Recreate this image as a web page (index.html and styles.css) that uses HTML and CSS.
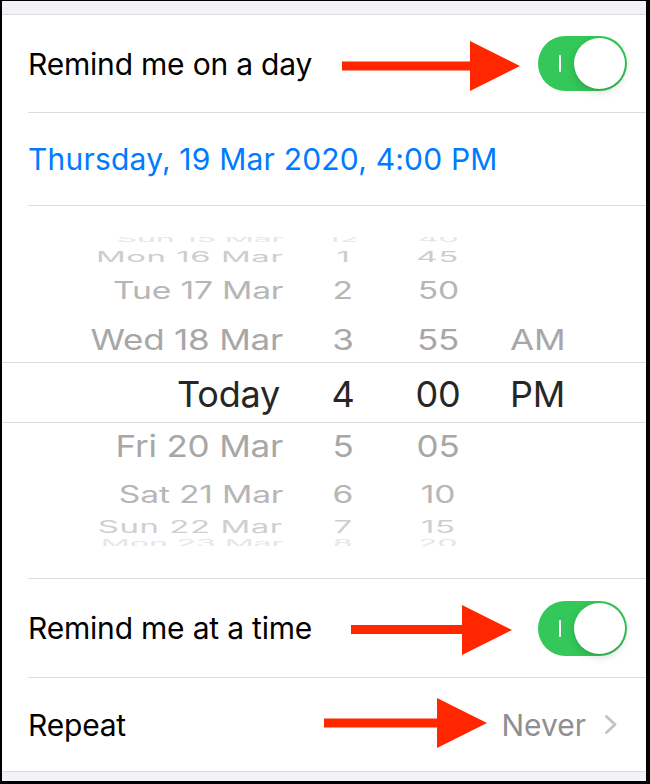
FILE: index.html
```html
<!DOCTYPE html>
<html lang="en">
<head>
<meta charset="utf-8">
<title>Reminder details</title>
<link rel="stylesheet" href="styles.css">
</head>
<body>
<div class="screen">
  <div class="top-gap"></div>

  <section class="group">
    <div class="cell">
      <div class="cell-body">
        <span class="label">Remind me on a day</span>
        <span class="switch"><span class="switch-mark"></span><span class="switch-knob"></span></span>
      </div>
    </div>

    <div class="cell">
      <div class="cell-body cell-date">
        <span class="label label-blue">Thursday, 19 Mar 2020, 4:00 PM</span>
      </div>
    </div>

    <div class="picker">
      <div class="wheel">
        <div class="wrow r-a"><span class="c-date"><i>Sun 15 Mar</i></span><span class="c-num"><i>12</i></span><span class="c-num"><i>40</i></span><span class="c-ampm"></span></div>
        <div class="wrow r-b"><span class="c-date"><i>Mon 16 Mar</i></span><span class="c-num"><i>1</i></span><span class="c-num"><i>45</i></span><span class="c-ampm"></span></div>
        <div class="wrow r-c"><span class="c-date"><i>Tue 17 Mar</i></span><span class="c-num"><i>2</i></span><span class="c-num"><i>50</i></span><span class="c-ampm"></span></div>
        <div class="wrow r-d"><span class="c-date"><i>Wed 18 Mar</i></span><span class="c-num"><i>3</i></span><span class="c-num"><i>55</i></span><span class="c-ampm"><i>AM</i></span></div>
        <div class="wrow r-sel"><span class="c-date"><i>Today</i></span><span class="c-num"><i>4</i></span><span class="c-num"><i>00</i></span><span class="c-ampm"><i>PM</i></span></div>
        <div class="wrow r-f"><span class="c-date"><i>Fri 20 Mar</i></span><span class="c-num"><i>5</i></span><span class="c-num"><i>05</i></span><span class="c-ampm"></span></div>
        <div class="wrow r-g"><span class="c-date"><i>Sat 21 Mar</i></span><span class="c-num"><i>6</i></span><span class="c-num"><i>10</i></span><span class="c-ampm"></span></div>
        <div class="wrow r-h"><span class="c-date"><i>Sun 22 Mar</i></span><span class="c-num"><i>7</i></span><span class="c-num"><i>15</i></span><span class="c-ampm"></span></div>
        <div class="wrow r-i"><span class="c-date"><i>Mon 23 Mar</i></span><span class="c-num"><i>8</i></span><span class="c-num"><i>20</i></span><span class="c-ampm"></span></div>
      </div>
    </div>
    <div class="sep"></div>

    <div class="cell">
      <div class="cell-body cell-time">
        <span class="label">Remind me at a time</span>
        <span class="switch"><span class="switch-mark"></span><span class="switch-knob"></span></span>
      </div>
    </div>

    <div class="cell">
      <div class="cell-body cell-last">
        <span class="label">Repeat</span>
        <span class="detail">
          <span class="detail-value">Never</span>
          <svg class="chevron" width="14" height="21" viewBox="0 0 14 21" aria-hidden="true">
            <polyline points="2.5,2.5 11,10.5 2.5,18.5" fill="none" stroke="#c4c4c8" stroke-width="3" stroke-linecap="round" stroke-linejoin="round"/>
          </svg>
        </span>
      </div>
    </div>
  </section>

  <!-- red callout arrows drawn over the list -->
  <svg class="callouts" width="650" height="784" viewBox="0 0 650 784" aria-hidden="true">
    <polygon points="342,61.5 470,61.5 470,41 520,66 470,91 470,70.5 342,70.5"/>
    <polygon points="351,625 462,625 462,605 512,630 462,655 462,634 351,634"/>
    <polygon points="324,718.5 437,718.5 437,698 487,723 437,748 437,727.5 324,727.5"/>
  </svg>
</div>
</body>
</html>
```

FILE: styles.css
```css
* {
  box-sizing: border-box;
}

html, body {
  margin: 0;
  padding: 0;
  background: #000;
}

.screen {
  position: relative;
  width: 650px;
  height: 784px;
  border-style: solid;
  border-color: #000;
  border-width: 1px 4px 3px 2px;
  background: #f2f2f7;
  font-family: "Inter", "Noto Sans", sans-serif;
  color: #000;
  overflow: hidden;
}

.top-gap {
  height: 13px;
}

.group {
  background: #fff;
  border-top: 1px solid #dcdce0;
  border-bottom: 1px solid #dcdce0;
}

.cell {
  padding-left: 26px;
}

.cell-body {
  display: flex;
  align-items: center;
  justify-content: space-between;
  height: 98px;
  padding-right: 19px;
  border-bottom: 1px solid #dcdce0;
}

.cell-date {
  height: 93px;
}

.cell-time {
  height: 99px;
}

.cell-last {
  height: 93px;
  padding-right: 28px;
  border-bottom: none;
}

.label {
  font-size: 30px;
  letter-spacing: -0.2px;
  line-height: 1;
}

.label-blue {
  color: #007aff;
  letter-spacing: 0.2px;
}

/* toggle switch */
.switch {
  display: flex;
  align-items: center;
  width: 89px;
  height: 55px;
  padding: 2px;
  border-radius: 28px;
  background: #34c759;
}

.switch-mark {
  width: 2px;
  height: 17px;
  margin-left: 19px;
  background: #fff;
  border-radius: 1px;
}

.switch-knob {
  width: 51px;
  height: 51px;
  margin-left: auto;
  border-radius: 50%;
  background: #fff;
  box-shadow: 0 3px 8px rgba(0, 0, 0, 0.15), 0 1px 1px rgba(0, 0, 0, 0.08);
}

/* date & time wheel */
.picker {
  height: 372px;
  padding-top: 31px;
}

.wheel {
  height: 309px;
  overflow: hidden;
}

.wrow {
  display: grid;
  grid-template-columns: 281px 120px 70px 1fr;
  grid-template-rows: 100%;
  font-size: 35px;
  letter-spacing: -0.2px;
  white-space: nowrap;
}

/* each wheel cell centres its label on the row, even when the row is shorter than the text */
.wrow > span {
  display: flex;
  align-items: center;
  height: 100%;
  min-height: 0;
}

.wrow i {
  display: block;
  font-style: normal;
  line-height: 1;
  flex: none;
}

.c-date {
  justify-content: flex-end;
}

.c-date i {
  transform-origin: right center;
}

.c-num {
  justify-content: center;
}

.c-ampm {
  padding-left: 37px;
}

.r-a { height: 24px; margin-top: -11px; color: #e6e6e6; }
.r-a i { transform: scale(0.92, 0.26); }
.r-b { height: 13px; color: #cdcdcd; }
.r-b i { transform: scale(0.94, 0.42); letter-spacing: 0.6px; }
.r-c { height: 54px; color: #b6b6b6; }
.r-c i { transform: scale(0.96, 0.68); }
.r-d { height: 45px; color: #a7a7a7; }
.r-d i { transform: scaleY(0.8); }

.r-sel {
  height: 61px;
  color: #262626;
  border-top: 1px solid #dcdce0;
  border-bottom: 1px solid #dcdce0;
  padding-top: 2px;
  font-size: 36px;
}

.r-sel .c-date i {
  margin-right: 3px;
}

.r-f { height: 47px; color: #a7a7a7; }
.r-f i { transform: scaleY(0.86); }
.r-g { height: 48px; color: #b6b6b6; }
.r-g i { transform: scale(0.96, 0.68); }
.r-h { height: 18px; color: #cfcfcf; }
.r-h i { transform: scale(0.94, 0.48); letter-spacing: 0.6px; }
.r-i { height: 14px; color: #e6e6e6; }
.r-i i { transform: scale(0.92, 0.3); }

.sep {
  height: 1px;
  margin-left: 26px;
  background: #dcdce0;
}

/* repeat value with disclosure chevron */
.detail {
  display: flex;
  align-items: center;
  gap: 18px;
}

.detail-value {
  font-size: 30px;
  line-height: 1;
  color: #8e8e93;
}

.chevron {
  display: block;
}

.callouts {
  position: absolute;
  left: -2px;
  top: -1px;
  fill: #ff2600;
  pointer-events: none;
}
```
